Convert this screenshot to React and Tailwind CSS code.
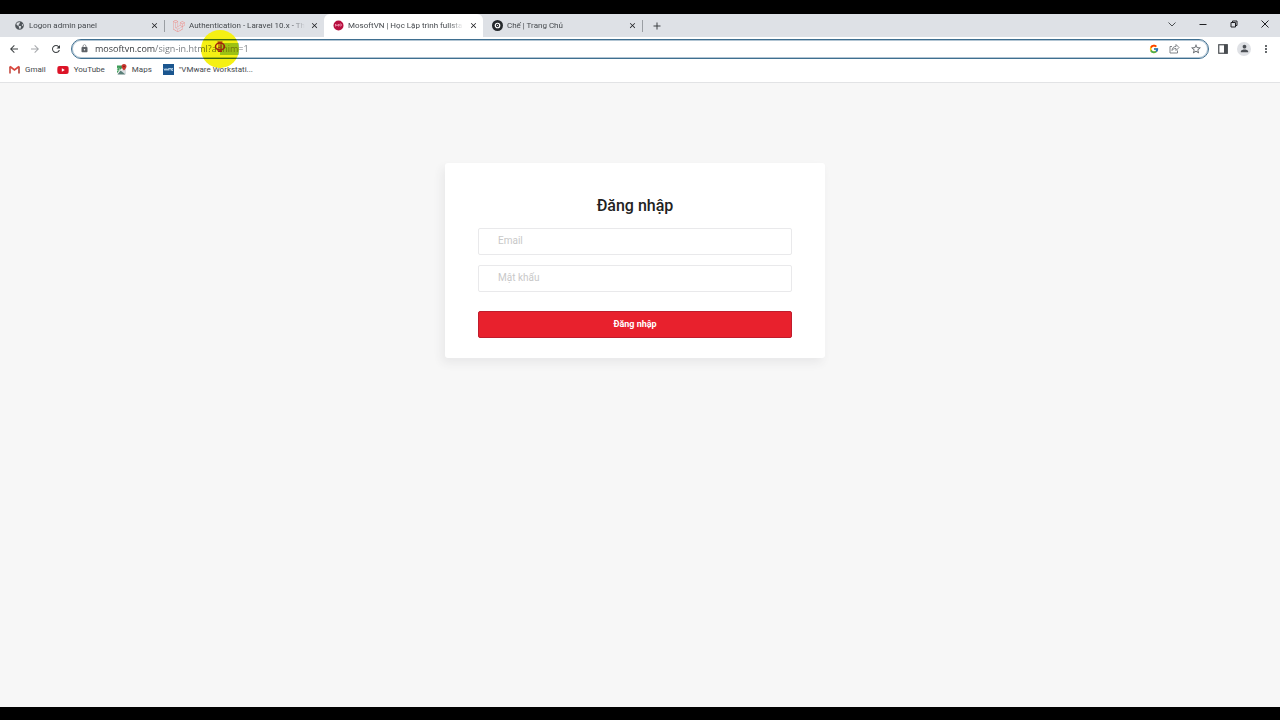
import { FaYoutube, FaGlobeAmericas, FaLaravel } from 'react-icons/fa'
import { FcGoogle } from 'react-icons/fc'
import { MdLock, MdArrowBack, MdArrowForward, MdRefresh, MdPerson, MdMoreVert, MdStarBorder, MdClose, MdAdd } from 'react-icons/md'

const TABS = [
  { id: 'logon', title: 'Logon admin panel', icon: LogonIcon },
  { id: 'laravel', title: 'Authentication - Laravel 10.x - Th', icon: LaravelIcon },
  { id: 'mosoft', title: 'MosoftVN | Học Lập trình fullsta', icon: MosoftIcon, active: true },
  { id: 'che', title: 'Chế | Trang Chủ', icon: CheIcon },
]

const BOOKMARKS = [
  { label: 'Gmail', icon: GmailIcon },
  { label: 'YouTube', icon: YoutubeIcon },
  { label: 'Maps', icon: MapsIcon },
  { label: '"VMware Workstati...', icon: VmwareIcon },
]

function LogonIcon() {
  return <FaGlobeAmericas className="w-[9px] h-[9px] text-[#50565b]" />
}

function LaravelIcon() {
  return <FaLaravel className="w-3 h-3 text-[#ef8580]" />
}

function MosoftIcon() {
  return (
    <svg className="w-[11px] h-[11px]" viewBox="0 0 22 22">
      <circle cx="11" cy="11" r="10" fill="#b80f3f" />
      <path d="M5 13V8l3 4 3-4v5M13 10a2 2 0 1 0 4 0 2 2 0 1 0-4 0" fill="none" stroke="#f09ab4" strokeWidth="1.6" />
    </svg>
  )
}

function CheIcon() {
  return (
    <svg className="w-[11px] h-[11px]" viewBox="0 0 22 22">
      <circle cx="11" cy="11" r="11" fill="#25282c" />
      <circle cx="11" cy="11" r="4.5" fill="none" stroke="#fff" strokeWidth="2.4" />
      <circle cx="11" cy="11" r="1.2" fill="#fff" />
    </svg>
  )
}

function GmailIcon() {
  return (
    <svg className="w-[11px] h-[9px]" viewBox="0 0 22 18">
      <path d="M2 17V3" stroke="#c8564c" strokeWidth="3.4" />
      <path d="M20 17V3" stroke="#b9483f" strokeWidth="3.4" />
      <path d="M2 3l9 7 9-7" fill="none" stroke="#d9453c" strokeWidth="3.4" />
    </svg>
  )
}

function YoutubeIcon() {
  return <FaYoutube className="w-3 h-3 text-[#dc1327]" />
}

function MapsIcon() {
  return (
    <svg className="w-[11px] h-[11px]" viewBox="0 0 22 22">
      <path d="M2 3h14v17H2z" fill="#3c9b57" />
      <path d="M2 20L16 6l4 4v10z" fill="#d8dde0" />
      <path d="M2 20L17 5" stroke="#f3f5f4" strokeWidth="2.5" />
      <path d="M9 13l10 8H3z" fill="#5a7f78" />
      <path d="M16 0a5 5 0 0 1 5 5c0 3-5 8-5 8s-5-5-5-8a5 5 0 0 1 5-5z" fill="#c9372f" />
      <circle cx="16" cy="5" r="1.6" fill="#7d1914" />
      <path d="M5 8a3 3 0 1 0 3 2H6" fill="none" stroke="#e5f2e8" strokeWidth="1.3" />
    </svg>
  )
}

function VmwareIcon() {
  return (
    <svg className="w-[11px] h-[11px]" viewBox="0 0 22 22">
      <rect width="22" height="22" fill="#1b568f" />
      <path d="M2 9l2 4 2-4 2 4 2-4M11 13v-4h3v4M14 9h3v4M20 9h-2v4h2" fill="none" stroke="#b9d3e8" strokeWidth="1.8" />
    </svg>
  )
}

function ShareIcon() {
  return (
    <svg className="w-[11px] h-[11px]" viewBox="0 0 22 22" fill="none" stroke="#6b7075" strokeWidth="1.7">
      <path d="M6 7H2v13h15v-5" />
      <path d="M6 15c0-5 3-8 8-8V3l6 6-6 6v-4c-4 0-6 1-8 4z" />
    </svg>
  )
}

function SidePanelIcon() {
  return (
    <svg className="w-[10px] h-[10px]" viewBox="0 0 20 20">
      <rect x="1.5" y="1.5" width="17" height="17" fill="none" stroke="#484c50" strokeWidth="2.4" />
      <rect x="12" y="1" width="7" height="18" fill="#484c50" />
    </svg>
  )
}

function Tab({ tab }) {
  const Icon = tab.icon
  return (
    <div
      className={`flex items-center w-[159px] h-full pl-2 pr-1 gap-1 ${
        tab.active ? 'bg-white rounded-t-md' : ''
      }`}
    >
      <button className="flex flex-1 items-center min-w-0 gap-1">
        <span className="flex w-3 shrink-0 justify-center"><Icon /></span>
        <span className="flex-1 whitespace-nowrap text-left text-[8px] leading-3 text-[#45494d] [mask-image:linear-gradient(90deg,#000_88%,transparent)]">
          {tab.title}
        </span>
      </button>
      <button aria-label="Close tab" className="flex w-3 shrink-0 justify-center">
        <MdClose className="w-[9px] h-[9px] text-[#202124]" />
      </button>
    </div>
  )
}

function TabStrip() {
  return (
    <div className="flex items-center h-[23px] pl-[5px] bg-[#dee1e6]">
      <Tab tab={TABS[0]} />
      <span className="w-px h-3 bg-[#9a9ea3]" />
      <Tab tab={TABS[1]} />
      <Tab tab={TABS[2]} />
      <Tab tab={TABS[3]} />
      <span className="w-px h-3 bg-[#9a9ea3]" />
      <button aria-label="New tab" className="ml-2">
        <MdAdd className="w-3 h-3 text-[#3c4043]" />
      </button>
      <div className="flex items-center gap-[21px] ml-auto pr-[10px] pb-1">
        <button aria-label="Search tabs">
          <svg className="w-[10px] h-[10px]" viewBox="0 0 20 20" fill="none" stroke="#4a4e52" strokeWidth="2">
            <path d="M3 7l7 7 7-7" />
          </svg>
        </button>
        <button aria-label="Minimize">
          <svg className="w-[10px] h-[10px]" viewBox="0 0 20 20" stroke="#202124" strokeWidth="2">
            <path d="M3 11h14" />
          </svg>
        </button>
        <button aria-label="Restore">
          <svg className="w-[10px] h-[10px]" viewBox="0 0 20 20" fill="none" stroke="#202124" strokeWidth="2">
            <path d="M4 7h9v9H4zM7 7V4h9v9h-3" />
          </svg>
        </button>
        <button aria-label="Close">
          <svg className="w-[10px] h-[10px]" viewBox="0 0 20 20" stroke="#202124" strokeWidth="2">
            <path d="M3 3l14 14M17 3L3 17" />
          </svg>
        </button>
      </div>
    </div>
  )
}

function PointerSpot() {
  return (
    <>
      <span className="absolute left-[129px] -top-[10px] w-[38px] h-[38px] rounded-full bg-[#f5f014] mix-blend-multiply pointer-events-none" />
      <svg className="absolute left-[142px] top-[1px] w-3 h-3 pointer-events-none" viewBox="0 0 24 24" fill="none" stroke="#a3200c" strokeWidth="3">
        <ellipse cx="12" cy="11" rx="9" ry="7" />
        <path d="M10 2v20M14 2v20M7 2h10M8 21h8" strokeWidth="2" />
      </svg>
    </>
  )
}

function Toolbar() {
  return (
    <div className="flex items-center h-[23px] px-2 bg-white">
      <div className="flex items-center gap-[9px] pr-[9px]">
        <button aria-label="Back"><MdArrowBack className="w-3 h-3 text-[#3c4043]" /></button>
        <button aria-label="Forward"><MdArrowForward className="w-3 h-3 text-[#a5a8ab]" /></button>
        <button aria-label="Reload"><MdRefresh className="w-3 h-3 text-[#3c4043]" /></button>
      </div>
      <div className="relative z-10 flex flex-1 items-center h-5 pl-2 pr-[6px] rounded-full border border-[#3f6f90] ring-1 ring-inset ring-[#3f6f90]/40">
        <MdLock className="w-[9px] h-[9px] shrink-0 text-[#5f6368]" />
        <span className="absolute left-[148px] top-[3px] w-[19px] h-3 bg-[#a3cdee]" />
        <input
          aria-label="Address"
          type="text"
          defaultValue="mosoftvn.com/sign-in.html?adhim=1"
          className="relative flex-1 ml-[6px] font-['Open_Sans',sans-serif] text-[9px] leading-3 outline-none text-transparent bg-clip-text bg-[linear-gradient(90deg,#303438_60px,#72777c_60px)]"
        />
        <div className="flex items-center gap-[10px]">
          <FcGoogle className="w-[10px] h-[10px]" />
          <button aria-label="Share"><ShareIcon /></button>
          <button aria-label="Bookmark"><MdStarBorder className="w-3 h-3 text-[#5f6368]" /></button>
        </div>
        <PointerSpot />
      </div>
      <div className="flex items-center gap-[9px] pl-[9px]">
        <button aria-label="Side panel"><SidePanelIcon /></button>
        <button aria-label="Profile" className="flex items-center justify-center w-[14px] h-[14px] rounded-full bg-[#dfe1e5]">
          <MdPerson className="w-[11px] h-[11px] text-[#4c5055]" />
        </button>
        <button aria-label="Menu"><MdMoreVert className="w-3 h-3 text-[#45494d]" /></button>
      </div>
    </div>
  )
}

function BookmarksBar() {
  return (
    <nav className="flex items-center h-[23px] pl-[9px] pb-[3px] gap-[11px] bg-white border-b border-[#e2e3e5]">
      {BOOKMARKS.map(b => (
        <a key={b.label} href="#" className="flex items-center gap-[5px] text-[8px] leading-3 text-[#45494d]">
          <b.icon />
          {b.label}
        </a>
      ))}
    </nav>
  )
}

function LoginForm() {
  return (
    <form
      className="w-[380px] mt-20 mr-[10px] px-[33px] pt-8 pb-5 rounded-[3px] bg-white shadow-[-3px_5px_10px_rgba(60,60,80,0.08)]"
      onSubmit={e => e.preventDefault()}
    >
      <h1 className="mb-[11px] text-center text-base leading-[22px] font-medium text-[#222]">Đăng nhập</h1>
      <input
        type="email"
        aria-label="Email"
        placeholder="Email"
        className="block w-full h-[27px] mb-[10px] px-[19px] pb-[2px] rounded-xs border border-[#e9e9eb] text-[10px] outline-none placeholder:text-[#c8c8c8]"
      />
      <input
        type="password"
        aria-label="Mật khẩu"
        placeholder="Mật khẩu"
        className="block w-full h-[27px] mb-[19px] px-[19px] pb-[2px] rounded-xs border border-[#e9e9eb] text-[10px] outline-none placeholder:text-[#c8c8c8]"
      />
      <button type="submit" className="block w-full h-[27px] rounded-xs border border-[#c01c2c] bg-[#e8212d] text-[9px] font-bold text-white">
        Đăng nhập
      </button>
    </form>
  )
}

export default function App() {
  return (
    <div className="flex flex-col min-h-screen pt-[14px] pb-[13px] bg-black font-[Roboto,sans-serif]">
      <header>
        <TabStrip />
        <Toolbar />
        <BookmarksBar />
      </header>
      <main className="flex flex-1 justify-center items-start bg-[#f7f7f7]">
        <LoginForm />
      </main>
    </div>
  )
}
